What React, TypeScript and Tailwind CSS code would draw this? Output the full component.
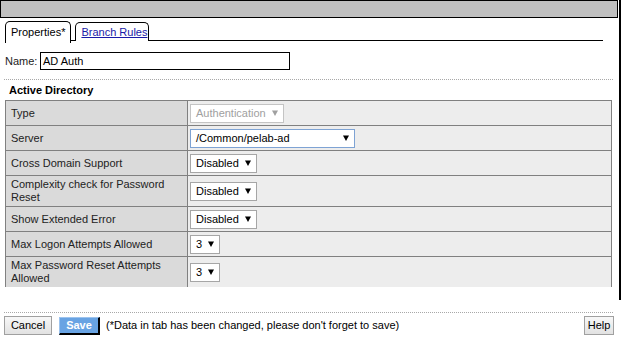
import React from 'react';

type Row = {
  label: React.ReactNode;
  tall?: boolean;
  control: React.ReactNode;
};

function Arrow({ color = '#000' }: { color?: string }) {
  return (
    <svg width="6" height="6" viewBox="0 0 6 6" className="shrink-0">
      <polygon points="0,0.5 6,0.5 3,6" fill={color} />
    </svg>
  );
}

function Select({
  value,
  width,
  disabled = false,
  focused = false,
}: {
  value: string;
  width?: string;
  disabled?: boolean;
  focused?: boolean;
}) {
  const border = disabled ? 'border-[#c4c4c4]' : focused ? 'border-[#7ea3d4]' : 'border-[#a6a6a6]';
  return (
    <div
      className={`flex items-center justify-between gap-[6px] h-[19px] border bg-white pl-[5px] pr-[5px] ${border} ${
        width ?? ''
      }`}
    >
      <span className={`leading-none ${disabled ? 'text-[#a0a0a0]' : 'text-black'}`}>{value}</span>
      <Arrow color={disabled ? '#a0a0a0' : '#000'} />
    </div>
  );
}

const rows: Row[] = [
  { label: 'Type', control: <Select value="Authentication" disabled /> },
  { label: 'Server', control: <Select value="/Common/pelab-ad" width="w-[165px]" focused /> },
  { label: 'Cross Domain Support', control: <Select value="Disabled" /> },
  {
    label: (
      <>
        Complexity check for Password
        <br />
        Reset
      </>
    ),
    tall: true,
    control: <Select value="Disabled" />,
  },
  { label: 'Show Extended Error', control: <Select value="Disabled" /> },
  { label: 'Max Logon Attempts Allowed', control: <Select value="3" /> },
  {
    label: (
      <>
        Max Password Reset Attempts
        <br />
        Allowed
      </>
    ),
    tall: true,
    control: <Select value="3" />,
  },
];

export default function App() {
  return (
    <div className="w-[621px] h-[351px] bg-white text-[11px] text-black font-['Liberation_Sans',Arial,sans-serif] overflow-hidden">
      {/* upper area with the window edge on the right */}
      <div className="h-[300px] border-r-2 border-black">
        {/* title bar */}
        <div className="w-[618px] h-[18px] border border-black bg-[#c0c0c0]" />

        {/* tabs */}
        <div className="flex items-start ml-[5px] mt-[3px] w-[598px]">
          <div className="h-[22px] border-t border-x border-black rounded-t-[5px] bg-white pl-[5px] pr-[5px] pt-[4px] leading-[13px]">
            Properties*
          </div>
          <div className="flex-1 h-[20px] border-b border-black">
            <div className="ml-[4px] mt-[1px] h-[19px] w-[74px] border-t border-x border-black rounded-t-[5px] bg-white pl-[5px] pt-[3px] leading-[13px]">
              <span className="underline text-[#1a1aa8]">Branch Rules</span>
            </div>
          </div>
        </div>

        {/* name */}
        <div className="flex items-center ml-[5px] mt-[9px]">
          <span className="w-[35px] text-[#222]">Name:</span>
          <div className="w-[250px] h-[18px] border border-black flex items-center pl-[2px] leading-none">
            AD Auth
          </div>
        </div>

        <div className="ml-[4px] mt-[9px] w-[609px] border-t border-dotted border-[#a8a8a8]" />

        <div className="h-[20px] flex items-center pl-[9px] font-bold">Active Directory</div>

        {/* properties table */}
        <div className="ml-[5px] w-[607px] h-[187px] overflow-hidden border-t border-x border-[#808080]">
          {rows.map((row, i) => (
            <div
              key={i}
              className={`flex border-b border-[#808080] ${row.tall ? 'h-[31px]' : 'h-[25px]'}`}
            >
              <div className="w-[182px] shrink-0 border-r border-[#808080] bg-[#dadada] pl-[5px] flex items-center leading-[13px] text-[#222]">
                <span>{row.label}</span>
              </div>
              <div className="flex-1 bg-[#ededed] pl-[2px] flex items-center">{row.control}</div>
            </div>
          ))}
        </div>
      </div>

      {/* footer */}
      <div className="ml-[4px] mt-[12px] w-[609px] border-t border-dotted border-[#a8a8a8]" />
      <div className="flex items-center pl-[4px] pr-[7px] mt-[3px]">
        <button className="w-[48px] h-[19px] border border-[#a0a0a0] bg-gradient-to-b from-[#f8f8f8] to-[#e2e2e2] leading-none">
          Cancel
        </button>
        <button className="ml-[7px] w-[41px] h-[18px] border border-t-[#9cc3ee] border-l-[#9cc3ee] border-r-2 border-b-2 border-r-black border-b-black bg-[#68a3e3] text-white font-bold leading-none">
          Save
        </button>
        <span className="ml-[6px]">(*Data in tab has been changed, please don't forget to save)</span>
        <button className="ml-auto w-[30px] h-[19px] border border-[#a0a0a0] bg-gradient-to-b from-[#f8f8f8] to-[#e2e2e2] leading-none">
          Help
        </button>
      </div>
    </div>
  );
}
